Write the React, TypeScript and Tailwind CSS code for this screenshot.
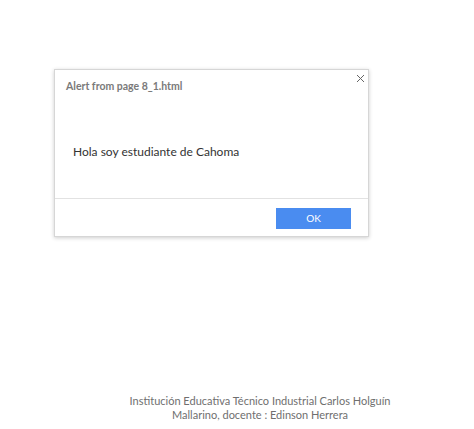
export default function App() {
  return (
    <div className="w-[474px] h-[429px] bg-white flex flex-col overflow-hidden" style={{ fontFamily: "Lato, 'Open Sans', sans-serif" }}>
      <div className="ml-[54px] mt-[69px] w-[315px] h-[168px] bg-white border border-[#d6d6d6] shadow-[0_1px_4px_rgba(0,0,0,0.2)] flex flex-col">
        <div className="h-[128px] flex flex-col pl-[11px] pr-[3px] pt-[4px]">
          <div className="flex items-start justify-between">
            <div className="mt-[5px] text-[10.5px] font-bold text-[#7a7a7a]">Alert from page 8_1.html</div>
            <svg width="9" height="9" viewBox="0 0 9 9">
              <path d="M1 1L8 8M8 1L1 8" stroke="#666" strokeWidth="1" />
            </svg>
          </div>
          <div className="mt-[48px] ml-[7px] text-[12px] text-[#333]">Hola soy estudiante de Cahoma</div>
        </div>
        <div className="h-px bg-[#e2e2e2]" />
        <div className="flex-1 flex justify-end items-start pt-[9px] pr-[17px]">
          <div className="w-[75px] h-[21px] bg-[#4a8cf0] text-white text-[10px] flex items-center justify-center">OK</div>
        </div>
      </div>
      <div className="mt-[157px] w-[520px] text-center text-[11px] leading-[14px] text-[#6f6f6f]">
        <div>Institución Educativa Técnico Industrial Carlos Holguín</div>
        <div>Mallarino, docente : Edinson Herrera</div>
      </div>
    </div>
  );
}
